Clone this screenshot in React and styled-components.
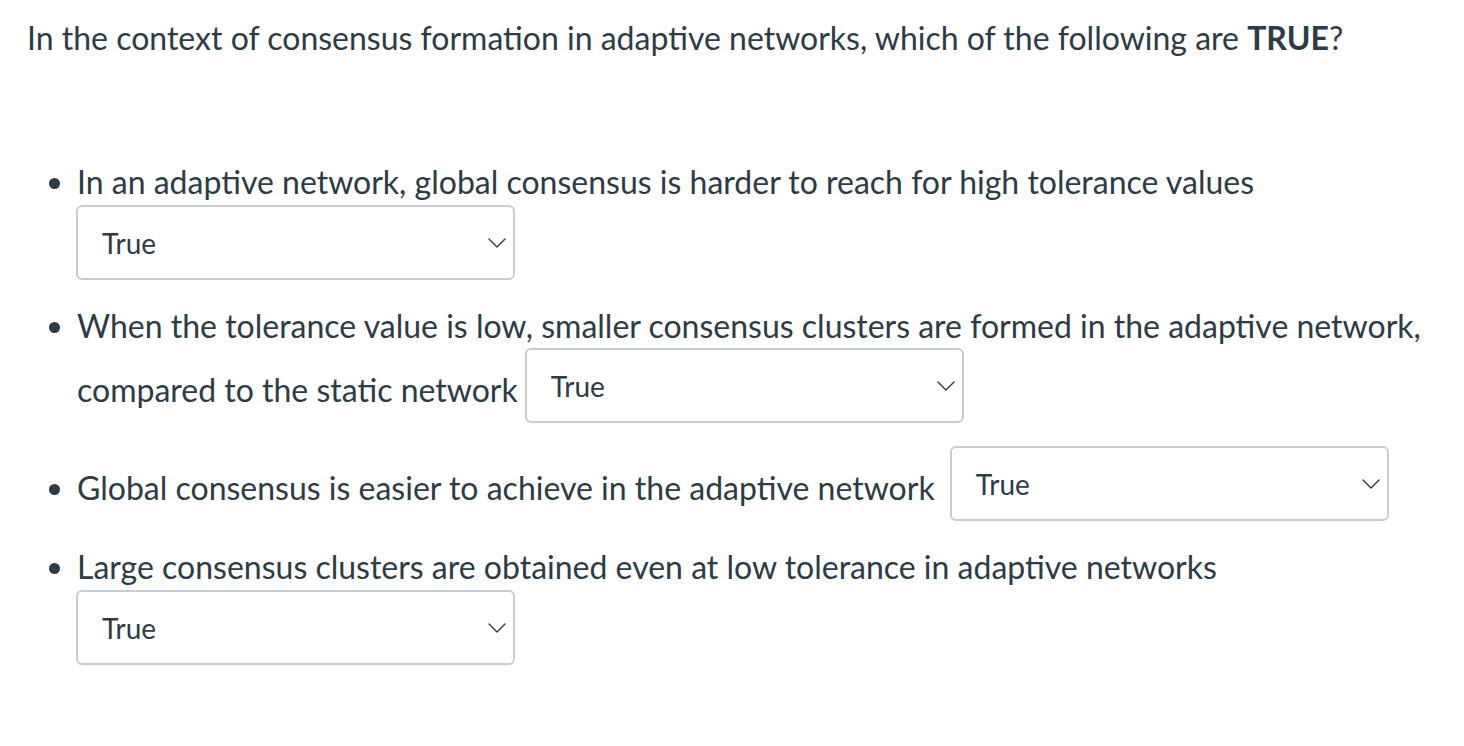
import React from 'react';
import styled, { createGlobalStyle } from 'styled-components';

const GlobalStyle = createGlobalStyle`
  body {
    margin: 0;
    background: #fff;
    font-family: Lato, "Open Sans", sans-serif;
    color: #2d3b45;
  }
`;

const Page = styled.div`
  padding: 15px 27px 0;
`;

const Question = styled.p`
  margin: 0;
  font-size: 32px;
  line-height: 45px;

  strong {
    font-weight: 700;
  }
`;

const List = styled.ul`
  margin: 99px 0 0;
  padding-left: 50px;
  font-size: 32px;
  line-height: 45px;
  list-style: disc;
`;

const Item = styled.li`
  margin-bottom: 23px;
`;

const SelectBox = styled.div`
  box-sizing: border-box;
  display: ${(p) => (p.$inline ? 'inline-flex' : 'flex')};
  vertical-align: ${(p) => (p.$inline ? '5px' : 'baseline')};
  align-items: center;
  justify-content: space-between;
  width: 439px;
  height: 75px;
  padding: 0 7px 0 24px;
  margin-left: ${(p) => (p.$inline ? '7px' : '-1px')};
  margin-top: ${(p) => (p.$inline ? '0' : '1px')};
  border: 2px solid #c7cdd1;
  border-radius: 6px;
  background: #fff;
  font-size: 28px;
  line-height: 1;
  color: #2d3b45;
`;

const Chevron = () => (
  <svg width="18" height="10" viewBox="0 0 18 10" fill="none">
    <path d="M1 1 L9 9 L17 1" stroke="#2d3b45" strokeWidth="1.4" strokeLinecap="round" strokeLinejoin="round" />
  </svg>
);

const Select = ({ inline, value }) => (
  <SelectBox $inline={inline}>
    <span>{value}</span>
    <Chevron />
  </SelectBox>
);

export default function App() {
  return (
    <Page>
      <GlobalStyle />
      <Question>
        In the context of consensus formation in adaptive networks, which of the following are <strong>TRUE</strong>?
      </Question>
      <List>
        <Item>
          In an adaptive network, global consensus is harder to reach for high tolerance values
          <Select value="True" />
        </Item>
        <Item>
          When the tolerance value is low, smaller consensus clusters are formed in the adaptive network, compared to the static network
          <Select inline value="True" />
        </Item>
        <Item>
          Global consensus is easier to achieve in the adaptive network{' '}
          <Select inline value="True" />
        </Item>
        <Item>
          Large consensus clusters are obtained even at low tolerance in adaptive networks
          <Select value="True" />
        </Item>
      </List>
    </Page>
  );
}
